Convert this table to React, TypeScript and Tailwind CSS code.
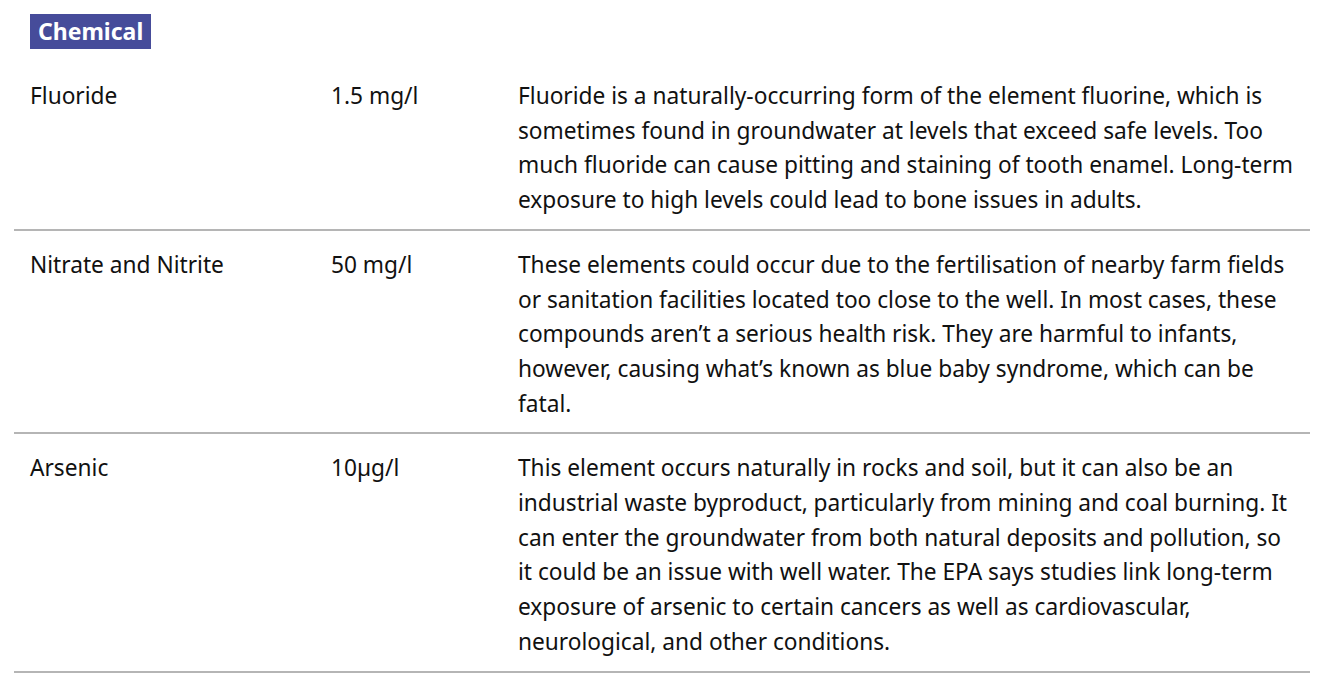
const rows = [
  {
    name: "Fluoride",
    limit: "1.5 mg/l",
    lines: [
      "Fluoride is a naturally-occurring form of the element fluorine, which is",
      "sometimes found in groundwater at levels that exceed safe levels. Too",
      "much fluoride can cause pitting and staining of tooth enamel. Long-term",
      "exposure to high levels could lead to bone issues in adults.",
    ],
  },
  {
    name: "Nitrate and Nitrite",
    limit: "50 mg/l",
    lines: [
      "These elements could occur due to the fertilisation of nearby farm fields",
      "or sanitation facilities located too close to the well. In most cases, these",
      "compounds aren’t a serious health risk. They are harmful to infants,",
      "however, causing what’s known as blue baby syndrome, which can be",
      "fatal.",
    ],
  },
  {
    name: "Arsenic",
    limit: "10µg/l",
    lines: [
      "This element occurs naturally in rocks and soil, but it can also be an",
      "industrial waste byproduct, particularly from mining and coal burning. It",
      "can enter the groundwater from both natural deposits and pollution, so",
      "it could be an issue with well water. The EPA says studies link long-term",
      "exposure of arsenic to certain cancers as well as cardiovascular,",
      "neurological, and other conditions.",
    ],
  },
];

export default function App() {
  return (
    <div className="min-h-screen bg-white pt-[14px] pl-[14px] pr-[8px] text-[#111] font-['Noto_Sans','Lato',sans-serif]">
      <div className="flex pl-[16px]">
        <span className="bg-[#464c9a] px-[8px] text-[23px] font-bold leading-[35px] text-white">
          Chemical
        </span>
      </div>
      <div className="mt-[13px]">
        {rows.map((row) => (
          <div
            key={row.name}
            className="flex border-b-2 border-[#b5b5b5] pt-[17px] pb-[11px] text-[22.7px] leading-[34.7px]"
          >
            <div className="w-[317px] shrink-0 pl-[16px]">{row.name}</div>
            <div className="w-[187px] shrink-0">{row.limit}</div>
            <div className="flex-1">
              {row.lines.map((line, i) => (
                <span key={i} className="block whitespace-nowrap">
                  {line}
                </span>
              ))}
            </div>
          </div>
        ))}
      </div>
    </div>
  );
}
